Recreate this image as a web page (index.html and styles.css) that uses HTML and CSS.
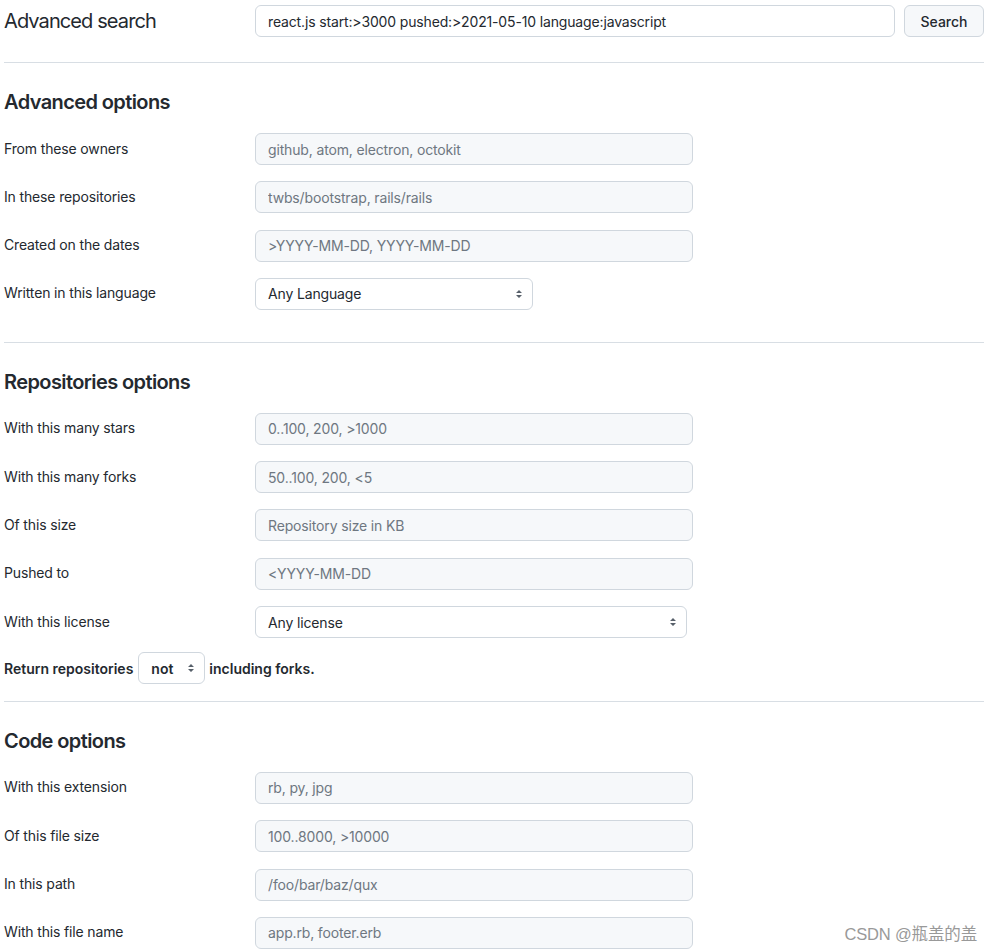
FILE: index.html
```html
<!DOCTYPE html>
<html lang="en">
<head>
    <meta charset="UTF-8">
    <title>Advanced search</title>
    <link rel="stylesheet" href="styles.css">
</head>
<body>

    <div class="page">
        <div class="search-header">
            <h1>Advanced search</h1>
            <input class="search-input" type="text" value="react.js start:>3000 pushed:>2021-05-10 language:javascript">
            <button class="search-btn">Search</button>
        </div>

        <hr>

        <div class="section">
            <h3>Advanced options</h3>
            <div class="form-row">
                <label>From these owners</label>
                <input class="field" type="text" placeholder="github, atom, electron, octokit">
            </div>
            <div class="form-row">
                <label>In these repositories</label>
                <input class="field" type="text" placeholder="twbs/bootstrap, rails/rails">
            </div>
            <div class="form-row">
                <label>Created on the dates</label>
                <input class="field" type="text" placeholder=">YYYY-MM-DD, YYYY-MM-DD">
            </div>
            <div class="form-row">
                <label>Written in this language</label>
                <div class="select select-language">
                    <span>Any Language</span>
                    <svg class="caret" width="8" height="10" viewBox="0 0 8 10"><path d="M4 1 L7 4 H1 Z M4 9 L1 6 H7 Z" fill="#57606a"/></svg>
                </div>
            </div>
        </div>

        <hr>

        <div class="section">
            <h3>Repositories options</h3>
            <div class="form-row">
                <label>With this many stars</label>
                <input class="field" type="text" placeholder="0..100, 200, >1000">
            </div>
            <div class="form-row">
                <label>With this many forks</label>
                <input class="field" type="text" placeholder="50..100, 200, <5">
            </div>
            <div class="form-row">
                <label>Of this size</label>
                <input class="field" type="text" placeholder="Repository size in KB">
            </div>
            <div class="form-row">
                <label>Pushed to</label>
                <input class="field" type="text" placeholder="<YYYY-MM-DD">
            </div>
            <div class="form-row">
                <label>With this license</label>
                <div class="select select-license">
                    <span>Any license</span>
                    <svg class="caret" width="8" height="10" viewBox="0 0 8 10"><path d="M4 1 L7 4 H1 Z M4 9 L1 6 H7 Z" fill="#57606a"/></svg>
                </div>
            </div>
            <div class="forks-row">
                Return repositories
                <div class="select select-small">
                    <span>not</span>
                    <svg class="caret" width="8" height="10" viewBox="0 0 8 10"><path d="M4 1 L7 4 H1 Z M4 9 L1 6 H7 Z" fill="#57606a"/></svg>
                </div>
                including forks.
            </div>
        </div>

        <hr>

        <div class="section">
            <h3>Code options</h3>
            <div class="form-row">
                <label>With this extension</label>
                <input class="field" type="text" placeholder="rb, py, jpg">
            </div>
            <div class="form-row">
                <label>Of this file size</label>
                <input class="field" type="text" placeholder="100..8000, >10000">
            </div>
            <div class="form-row">
                <label>In this path</label>
                <input class="field" type="text" placeholder="/foo/bar/baz/qux">
            </div>
            <div class="form-row">
                <label>With this file name</label>
                <input class="field" type="text" placeholder="app.rb, footer.erb">
            </div>
        </div>
    </div>

    <div class="watermark">CSDN @瓶盖的盖</div>

</body>
</html>
```

FILE: styles.css
```css
body {
    font-family: Inter, "Noto Sans", "Liberation Sans", sans-serif;
    color: #24292f;
    background-color: #fff;
    margin: 0;
    font-size: 14px;
    letter-spacing: -0.15px;
    overflow: hidden;
}
.page {
    padding: 5px 9px 0 4px;
}
.search-header {
    display: flex;
    align-items: center;
    margin-bottom: 25px;
}
h1 {
    width: 251px;
    margin: 0;
    font-size: 20px;
    font-weight: 400;
    line-height: 32px;
    letter-spacing: -0.9px;
}
.search-input {
    flex: 1;
    height: 32px;
    box-sizing: border-box;
    border: 1px solid #d0d7de;
    border-radius: 6px;
    padding: 0 12px;
    font-family: inherit;
    font-size: 14px;
    letter-spacing: -0.15px;
    color: #24292f;
    background-color: #fff;
    margin-right: 9px;
}
.search-btn {
    width: 80px;
    height: 32px;
    background-color: #f6f8fa;
    border: 1px solid #d0d7de;
    border-radius: 6px;
    font-family: inherit;
    font-size: 14px;
    font-weight: 500;
    color: #24292f;
}
hr {
    border: 0;
    border-top: 1px solid #d8dee4;
    margin: 0;
}
.section {
    padding-top: 24px;
    padding-bottom: 15.5px;
}
h3 {
    margin: 0 0 16px;
    font-size: 20px;
    font-weight: 600;
    line-height: 30px;
    letter-spacing: -0.6px;
}
.form-row {
    display: flex;
    align-items: center;
    margin-bottom: 16.33px;
}
.form-row label {
    width: 251px;
    flex-shrink: 0;
    padding-bottom: 2px;
}
.field {
    width: 438px;
    height: 32px;
    box-sizing: border-box;
    border: 1px solid #d0d7de;
    border-radius: 6px;
    padding: 0 12px;
    font-family: inherit;
    font-size: 14px;
    letter-spacing: -0.15px;
    color: #24292f;
    background-color: #f6f8fa;
}
.field::placeholder {
    color: #6e7781;
}
.select {
    display: flex;
    align-items: center;
    justify-content: space-between;
    height: 32px;
    box-sizing: border-box;
    border: 1px solid #d0d7de;
    border-radius: 6px;
    padding: 0 9px 0 12px;
    background-color: #fff;
}
.select-language {
    width: 278px;
}
.select-license {
    width: 432px;
}
.select-small {
    width: 67px;
    margin: 0 4px 0 5px;
    font-weight: 600;
}
.forks-row {
    display: flex;
    align-items: center;
    font-weight: 600;
    letter-spacing: 0;
    margin-top: -2px;
    margin-bottom: 1px;
}
.section:last-child {
    padding-bottom: 0;
}
.watermark {
    position: absolute;
    right: 16px;
    top: 921px;
    font-family: "Liberation Sans", "Noto Sans CJK SC", sans-serif;
    font-size: 16.5px;
    color: #999;
}
```
